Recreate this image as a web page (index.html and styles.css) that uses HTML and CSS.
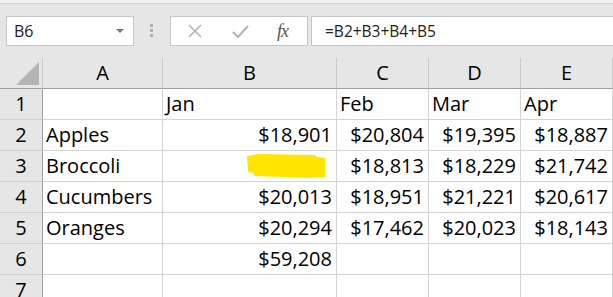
FILE: index.html
```html
<!DOCTYPE html>
<html lang="en">
<head>
    <meta charset="UTF-8">
    <title>Sheet</title>
    <link rel="stylesheet" href="styles.css">
</head>
<body>
    <div class="topstrip"></div>
    <div class="fbar">
        <div class="namebox">
            <span>B6</span>
            <span class="caret"></span>
        </div>
        <div class="grip"><i></i><i></i><i></i></div>
        <div class="fbtns">
            <svg class="ico" width="14" height="14" viewBox="0 0 14 14"><path d="M1 1L13 13M13 1L1 13" stroke="#b4b4b4" stroke-width="1.6" fill="none"/></svg>
            <svg class="ico" width="17" height="13" viewBox="0 0 17 13"><path d="M1 7L6 12L16 1" stroke="#b4b4b4" stroke-width="2" fill="none"/></svg>
            <span class="fx">fx</span>
        </div>
        <div class="finput">=B2+B3+B4+B5</div>
    </div>

    <div class="sheet">
        <div class="hd corner">
            <svg width="23" height="23" viewBox="0 0 23 23"><polygon points="23,0 23,23 0,23" fill="#b4b4b4"/></svg>
        </div>
        <div class="hd col">A</div>
        <div class="hd col">B</div>
        <div class="hd col">C</div>
        <div class="hd col">D</div>
        <div class="hd col">E</div>

        <div class="hd row">1</div>
        <div class="c"></div>
        <div class="c">Jan</div>
        <div class="c">Feb</div>
        <div class="c">Mar</div>
        <div class="c">Apr</div>

        <div class="hd row">2</div>
        <div class="c">Apples</div>
        <div class="c num">$18,901</div>
        <div class="c num">$20,804</div>
        <div class="c num">$19,395</div>
        <div class="c num">$18,887</div>

        <div class="hd row">3</div>
        <div class="c">Broccoli</div>
        <div class="c num mark">
            <svg class="scribble" width="82" height="26" viewBox="0 0 82 26"><path d="M2 3 L14 1 L40 1.5 L70 2 L72 4 L80 5 L80 24 L62 25 L40 24 L22 23.5 L10 23 L8 20 L3 19 Z" fill="#ffe500"/></svg>
        </div>
        <div class="c num">$18,813</div>
        <div class="c num">$18,229</div>
        <div class="c num">$21,742</div>

        <div class="hd row">4</div>
        <div class="c">Cucumbers</div>
        <div class="c num">$20,013</div>
        <div class="c num">$18,951</div>
        <div class="c num">$21,221</div>
        <div class="c num">$20,617</div>

        <div class="hd row">5</div>
        <div class="c">Oranges</div>
        <div class="c num">$20,294</div>
        <div class="c num">$17,462</div>
        <div class="c num">$20,023</div>
        <div class="c num">$18,143</div>

        <div class="hd row">6</div>
        <div class="c"></div>
        <div class="c num">$59,208</div>
        <div class="c"></div>
        <div class="c"></div>
        <div class="c"></div>

        <div class="hd row">7</div>
        <div class="c"></div>
        <div class="c"></div>
        <div class="c"></div>
        <div class="c"></div>
        <div class="c"></div>
    </div>
</body>
</html>
```

FILE: styles.css
```css
body{margin:0; background:#e6e6e6; font-family:"Open Sans", "Noto Sans", sans-serif; overflow:hidden; height:297px;}

.topstrip{height:3px; background:#f3f2f1; border-bottom:1px solid #d6d6d6;}

/* formula bar */
.fbar{display:flex; align-items:flex-start; padding-top:12px; height:30px;}
.namebox{box-sizing:border-box; width:128px; height:30px; margin-left:6px; background:#fff; border:1px solid #c6c6c6; display:flex; align-items:center; justify-content:space-between; padding:0 9px 0 7px; font-size:16px; color:#222;}
.caret{width:0; height:0; border-left:4px solid transparent; border-right:4px solid transparent; border-top:4px solid #777;}
.grip{display:flex; flex-direction:column; gap:2px; margin:8px 0 0 16px; width:4px;}
.grip i{display:block; width:3px; height:3px; background:#b0b0b0;}
.fbtns{box-sizing:border-box; width:138px; height:30px; margin-left:16px; background:#fff; border:1px solid #c6c6c6; display:flex; align-items:center; padding-left:17px;}
.fbtns .ico:nth-child(2){margin-left:30px;}
.fx{margin-left:28px; font-family:"Liberation Serif", serif; font-style:italic; font-size:18px; color:#555; letter-spacing:-1px;}
.finput{box-sizing:border-box; flex:1; height:30px; margin-left:3px; background:#fff; border:1px solid #c6c6c6; border-right:none; padding-left:13px; font-size:15.5px; line-height:28px; color:#222;}

/* sheet grid */
.sheet{margin-top:12px; display:grid; grid-template-columns:43px 120px 174px 92px 92px 1fr; grid-auto-rows:31px; font-size:20px; color:#000;}
.hd{box-sizing:border-box; background:#e6e6e6; border-right:1px solid #c8c8c8; border-bottom:1px solid #d0d0d0; line-height:30px; text-align:center;}
.hd.col{border-bottom-color:#9e9e9e;}
.hd.corner{display:flex; align-items:flex-end; justify-content:flex-end; padding:0 3px 3px 0; border-bottom-color:#9e9e9e;}
.hd.row{border-right-color:#a0a0a0;}
.c{box-sizing:border-box; background:#fff; border-right:1px solid #d4d4d4; border-bottom:1px solid #d4d4d4; line-height:30px; padding:0 3px; white-space:nowrap; overflow:hidden;}
.num{text-align:right; padding-right:4px;}
.mark{position:relative;}
.scribble{position:absolute; left:82px; top:2px;}
```
